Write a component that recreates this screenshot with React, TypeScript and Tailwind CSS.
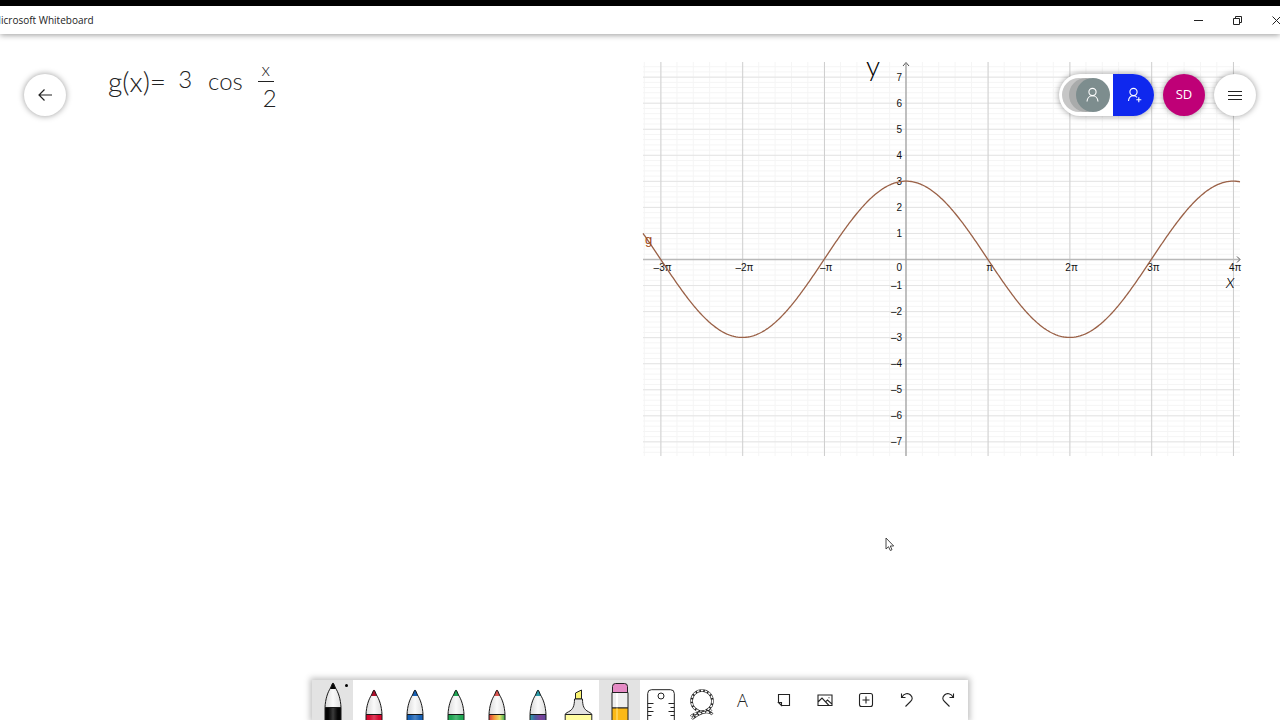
import React, { useState } from 'react';

const ORIGIN_X = 263;
const ORIGIN_Y = 197;
const PI_STEP = 81.8;
const UNIT_STEP = 26.05;
const GRAPH_WIDTH = 597;
const GRAPH_HEIGHT = 394;

const xTicks = [
  { n: -3, label: '–3π' },
  { n: -2, label: '–2π' },
  { n: -1, label: '–π' },
  { n: 1, label: 'π' },
  { n: 2, label: '2π' },
  { n: 3, label: '3π' },
  { n: 4, label: '4π' },
];

const yTicks = [7, 6, 5, 4, 3, 2, 1, -1, -2, -3, -4, -5, -6, -7];

const range = (from: number, to: number) =>
  Array.from({ length: to - from + 1 }, (_, i) => from + i);

const curvePoints = range(0, GRAPH_WIDTH)
  .map((x) => {
    const angle = ((x - ORIGIN_X) / PI_STEP) * Math.PI;
    return `${x},${(ORIGIN_Y + 0.3 - 3 * Math.cos(angle / 2) * UNIT_STEP).toFixed(2)}`;
  })
  .join(' ');

const Graph: React.FC = () => (
  <svg
    width={GRAPH_WIDTH}
    height={GRAPH_HEIGHT}
    className="block overflow-visible font-['Liberation_Sans',sans-serif] text-[10px]"
    role="img"
    aria-label="g"
  >
    {/* Minor grid */}
    <g stroke="#f5f5f5">
      {range(-16, 20).map((i) => {
        const x = ORIGIN_X + (i * PI_STEP) / 5;
        return <line key={i} x1={x} x2={x} y1={0} y2={GRAPH_HEIGHT} />;
      })}
      {range(-37, 37).map((i) => {
        const y = ORIGIN_Y + 0.5 + (i * UNIT_STEP) / 5;
        return <line key={i} x1={0} x2={GRAPH_WIDTH} y1={y} y2={y} />;
      })}
    </g>

    {/* Major grid */}
    <g stroke="#e4e4e4">
      {yTicks.map((n) => {
        const y = ORIGIN_Y + 0.5 - n * UNIT_STEP;
        return <line key={n} x1={0} x2={GRAPH_WIDTH} y1={y} y2={y} />;
      })}
    </g>
    <g stroke="#cfcfcf">
      {xTicks.map(({ n }) => {
        const x = ORIGIN_X + 0.3 + n * PI_STEP;
        return <line key={n} x1={x} x2={x} y1={0} y2={GRAPH_HEIGHT} />;
      })}
    </g>

    {/* Axes */}
    <line x1={0} x2={GRAPH_WIDTH} y1={197.5} y2={197.5} stroke="#b9b9b9" strokeWidth={1.3} />
    <line x1={263} x2={263} y1={2} y2={GRAPH_HEIGHT} stroke="#a6a6a6" strokeWidth={1.4} />
    <path d="M260 4l3-3.5 3 3.5M594 194.5l3 3-3 3" fill="none" stroke="#555" />

    {/* Labels */}
    <g fill="#111" textAnchor="middle">
      {xTicks.map(({ n, label }) => (
        <text key={n} x={ORIGIN_X + n * PI_STEP + 2} y={209}>
          {label}
        </text>
      ))}
    </g>
    <g fill="#111" textAnchor="end">
      {yTicks.map((n) => (
        <text key={n} x={259} y={Math.round(ORIGIN_Y - n * UNIT_STEP) + 4}>
          {n < 0 ? `–${-n}` : n}
        </text>
      ))}
      <text x={259} y={209}>0</text>
    </g>

    <polyline points={curvePoints} fill="none" stroke="#9a6147" strokeWidth={1.3} />
    <text x={2} y={182} fill="#a04a18" className="text-[13px]">g</text>
  </svg>
);

const Formula: React.FC = () => (
  <div className="flex items-start text-[#222] font-['Lato',sans-serif] font-light">
    <span className="pt-1 text-[28px] leading-8">g(x)=</span>
    <span className="ml-3 pt-1 text-[24px] leading-7">3</span>
    <span className="ml-4 pt-1 text-[24px] leading-8">cos</span>
    <span className="ml-3 flex flex-col items-center">
      <span className="w-4 border-b border-[#222] pb-1 text-center text-[18px] leading-4">x</span>
      <span className="pl-2 pt-1 text-[24px] leading-6">2</span>
    </span>
  </div>
);

const Pen: React.FC<{ color: string; id: string; stops?: string[]; tip?: string }> = ({
  color,
  id,
  stops,
  tip,
}) => (
  <svg width="18" height="44" viewBox="0 0 18 44" aria-hidden="true">
    <defs>
      <linearGradient id={`${id}-body`}>
        {stops ? (
          stops.map((c, i) => <stop key={c} offset={i / (stops.length - 1)} stopColor={c} />)
        ) : (
          <>
            <stop offset="0.2" stopColor={color} />
            <stop offset="0.5" stopColor={color} stopOpacity="0.78" />
            <stop offset="0.8" stopColor={color} />
          </>
        )}
      </linearGradient>
      <linearGradient id={`${id}-cone`}>
        <stop offset="0" stopColor="#d9d9d9" />
        <stop offset="0.5" stopColor="#fafafa" />
        <stop offset="1" stopColor="#dedede" />
      </linearGradient>
    </defs>
    <path
      d="M1 25.5C1.4 17 3.6 10.5 6.5 6L9 .8 11.5 6C14.4 10.5 16.6 17 17 25.5V44H1z"
      fill={`url(#${id}-cone)`}
    />
    <path d="M1 25.5H17V44H1z" fill={`url(#${id}-body)`} />
    <path d="M6 7L8.3 1.5Q9 .2 9.7 1.5L12 7z" fill={tip ?? color} />
    <path
      d="M1 44V25.5C1.4 17 3.6 10.5 6.5 6L8.3 1.8Q9 .3 9.7 1.8L11.5 6C14.4 10.5 16.6 17 17 25.5V44M1 25.5H17"
      fill="none"
      stroke="#1a1a1a"
      strokeWidth="1"
    />
  </svg>
);

const Highlighter: React.FC = () => (
  <svg width="29" height="44" viewBox="0 0 29 44" aria-hidden="true">
    <path d="M11.5 10V4L17.5 1V10z" fill="#fbf573" stroke="#222" />
    <path d="M10.5 10H18.5C18.5 17 20 20.5 24.5 22.8Q27.5 24 27.8 25.5H1.2Q1.5 24 4.5 22.8C9 20.5 10.5 17 10.5 10z" fill="#e2e2e2" stroke="#222" />
    <path d="M1.2 25.5H27.8V44H1.2z" fill="#fffda0" stroke="#222" />
  </svg>
);

const Eraser: React.FC = () => (
  <svg width="18" height="46" viewBox="0 0 18 46" aria-hidden="true">
    <path d="M1.5 10.5V4.5Q1.5 1.5 4.5 1.5H13.5Q16.5 1.5 16.5 4.5V10.5z" fill="#e58bc5" stroke="#222" />
    <path d="M1 10.5H17V26H1z" fill="#eeeeee" stroke="#222" />
    <path d="M6 11V25.5" stroke="#fff" strokeWidth="2" />
    <path d="M1 26H17V46H1z" fill="#fbb917" stroke="#222" />
    <path d="M6 26.5V46" stroke="#ffd04f" strokeWidth="2" />
  </svg>
);

const Ruler: React.FC = () => (
  <svg width="28" height="44" viewBox="0 0 28 44" fill="none" stroke="#222" aria-hidden="true">
    <path d="M.7 44V4.5Q.7 .7 4.5 .7H23.5Q27.3 .7 27.3 4.5V44" fill="#fff" />
    <circle cx="14" cy="7" r="3" />
    <path d="M.7 14.5H6.5M.7 18.5H4.5M.7 22.5H6.5M.7 26.5H4.5M27.3 14.5H21.5M27.3 18.5H23.5M27.3 22.5H21.5M27.3 26.5H23.5" />
  </svg>
);

const Lasso: React.FC = () => (
  <svg width="26" height="44" viewBox="0 0 26 44" fill="none" stroke="#222" aria-hidden="true">
    <circle cx="13" cy="12" r="10.5" strokeWidth="2.6" />
    <circle cx="13" cy="12" r="10.5" stroke="#fff" strokeWidth="1.5" strokeDasharray="2.5 1.5" />
    <path d="M2 27.5C6 21.5 18 26 22.5 20.5M23.5 25.5C19 20 8 25 3 30" strokeWidth="2.4" />
    <path d="M2 27.5C6 21.5 18 26 22.5 20.5M23.5 25.5C19 20 8 25 3 30" stroke="#fff" strokeWidth="1.2" strokeDasharray="2.5 1.5" />
  </svg>
);

const PersonIcon: React.FC<{ plus?: boolean }> = ({ plus }) => (
  <svg width="16" height="16" viewBox="0 0 16 16" fill="none" stroke="#fff" strokeWidth="1.1" aria-hidden="true">
    <circle cx="7.5" cy="5" r="3.6" />
    {plus ? (
      <path d="M2.5 14C2.7 10.8 4.8 8.8 7.5 8.8 9 8.8 10.2 9.4 11 10.4M12.8 10.3V15.3M10.3 12.8H15.3" />
    ) : (
      <path d="M2 14.5C2.2 11 4.6 8.8 7.5 8.8S12.8 11 13 14.5" />
    )}
  </svg>
);

const LineIcon: React.FC<{ d: string }> = ({ d }) => (
  <svg width="16" height="16" viewBox="0 0 16 16" fill="none" stroke="#222" strokeWidth="1.1" aria-hidden="true">
    <path d={d} />
  </svg>
);

const drawTools = [
  { name: 'Black pen', raised: true, icon: <Pen id="black" color="#050505" /> },
  { name: 'Red pen', icon: <Pen id="red" color="#d5092f" tip="#b0102c" /> },
  { name: 'Blue pen', icon: <Pen id="blue" color="#1761b5" /> },
  { name: 'Green pen', icon: <Pen id="green" color="#1fa653" /> },
  {
    name: 'Rainbow pen',
    icon: <Pen id="rainbow" color="#d9534f" stops={['#d9363e', '#f59a3c', '#e8e36a', '#35a853']} />,
  },
  {
    name: 'Galaxy pen',
    icon: <Pen id="galaxy" color="#2b9aa8" stops={['#2aa0a4', '#4a5aa0', '#7d3f98', '#5b4a9e']} />,
  },
  { name: 'Highlighter', icon: <Highlighter /> },
  { name: 'Eraser', raised: true, icon: <Eraser /> },
  { name: 'Ruler', icon: <Ruler /> },
  { name: 'Lasso select', icon: <Lasso /> },
];

const insertTools = [
  { name: 'Add note', d: 'M5.5 13.5H13.5V2.5H2.5V10.5M2.5 10.5H5.5V13.5zM2.5 10.5L5.5 13.5' },
  { name: 'Add image', d: 'M1 3H15V13.5H1zM1 10L5 6 12 13.5M8.5 9.8L10.5 8 15 12.2M11.5 5.7H12.5' },
  { name: 'Insert', d: 'M3.5 1.5H12.5Q14.5 1.5 14.5 3.5V12.5Q14.5 14.5 12.5 14.5H3.5Q1.5 14.5 1.5 12.5V3.5Q1.5 1.5 3.5 1.5zM8 4.5V11.5M4.5 8H11.5' },
  { name: 'Undo', d: 'M2.5 1.5V5.5H6.5M2.8 5.3C5 1.5 9 .5 11.5 3S13.5 7.8 11.5 9.5L6.5 14.5' },
  { name: 'Redo', d: 'M13.5 1.5V5.5H9.5M13.2 5.3C11 1.5 7 .5 4.5 3S2.5 7.8 4.5 9.5L9.5 14.5' },
];

const Toolbar: React.FC = () => {
  const [selected, setSelected] = useState(['Black pen', 'Eraser']);

  return (
    <div className="relative flex h-10 self-center bg-white shadow-[0_0_6px_2px_rgba(0,0,0,0.25)]">
      {drawTools.map((tool) => (
        <button
          key={tool.name}
          aria-label={tool.name}
          onClick={() => setSelected([tool.name])}
          className={`relative flex w-[41px] items-start justify-center overflow-hidden ${
            tool.raised ? 'pt-[2px]' : 'pt-[9px]'
          } ${selected.includes(tool.name) ? 'bg-[#e3e3e3]' : 'bg-white'}`}
        >
          {tool.icon}
          {tool.name === 'Black pen' && (
            <span className="absolute right-[5px] top-1 size-[3px] rounded-full bg-black" />
          )}
        </button>
      ))}
      <button
        aria-label="Add text"
        className="flex w-[41px] items-center justify-center text-[18px] font-light text-[#222]"
      >
        A
      </button>
      {insertTools.map((tool) => (
        <button key={tool.name} aria-label={tool.name} className="flex w-[41px] items-center justify-center">
          <LineIcon d={tool.d} />
        </button>
      ))}
    </div>
  );
};

const App: React.FC = () => {
  return (
    <div className="flex h-screen flex-col overflow-hidden bg-white font-['Open_Sans','Noto_Sans',sans-serif]">
      <div className="h-[6px] shrink-0 bg-black" />

      {/* Title bar */}
      <header className="relative z-10 flex h-7 shrink-0 items-center justify-between bg-white shadow-[0_1px_6px_rgba(0,0,0,0.4)]">
        <h1 className="-ml-2 text-[10px] text-[#222]">Microsoft Whiteboard</h1>
        <div className="-mr-4 flex">
          <button aria-label="Minimize" className="flex w-[39px] justify-center">
            <svg width="9" height="9" stroke="#222" aria-hidden="true">
              <path d="M0 4.5H9" />
            </svg>
          </button>
          <button aria-label="Restore" className="flex w-[39px] justify-center">
            <svg width="9" height="9" fill="none" stroke="#222" aria-hidden="true">
              <path d="M.5 2.5H6.5V8.5H.5zM2.5 2.5V.5H8.5V6.5H6.5" />
            </svg>
          </button>
          <button aria-label="Close" className="flex w-[39px] justify-center">
            <svg width="9" height="9" stroke="#222" aria-hidden="true">
              <path d="M.5 .5L8.5 8.5M8.5 .5L.5 8.5" />
            </svg>
          </button>
        </div>
      </header>

      <main className="relative flex flex-1 flex-col justify-between">
        {/* Board content */}
        <div className="absolute left-[108px] top-[27px]">
          <Formula />
        </div>
        <div className="absolute left-[643px] top-7">
          <Graph />
        </div>
        <div className="absolute left-[866px] top-[25px] h-7 overflow-hidden font-['Lato',sans-serif] text-[28px] font-light leading-7 text-black">
          <span className="-mt-2 block">y</span>
        </div>
        <div className="absolute left-[1226px] top-[238px] font-['Lato',sans-serif] text-[20px] font-light leading-4 text-black italic">
          x
        </div>
        <svg className="absolute left-[885px] top-[503px]" width="10" height="15" viewBox="0 0 10 15" aria-hidden="true">
          <path d="M1 1V12L3.5 9.7 5.3 13.5 7 12.7 5.3 9H8.7z" fill="#fff" stroke="#333" strokeWidth="0.9" />
        </svg>

        {/* Floating controls */}
        <div className="relative flex items-start justify-between px-6 pt-10">
          <button
            aria-label="Back"
            className="flex size-[42px] items-center justify-center rounded-full bg-white shadow-[0_0_6px_rgba(0,0,0,0.4)]"
          >
            <svg width="14" height="14" viewBox="0 0 14 14" fill="none" stroke="#222" strokeWidth="1.2" aria-hidden="true">
              <path d="M14 7H1M6.5 1.5L1 7 6.5 12.5" />
            </svg>
          </button>

          <div className="flex gap-[9px]">
            <div className="flex h-[42px] overflow-hidden rounded-full bg-white shadow-[0_0_6px_rgba(0,0,0,0.4)]">
              <button aria-label="Participants" className="flex items-center px-[3px]">
                <span className="size-[34px] rounded-full bg-[#c6c6c6]" />
                <span className="-ml-[27px] size-[34px] rounded-full bg-[#a9abab]" />
                <span className="-ml-[27px] flex size-[34px] items-center justify-center rounded-full bg-[#7d8d8e]">
                  <PersonIcon />
                </span>
              </button>
              <button aria-label="Invite" className="flex w-[41px] items-center justify-center bg-[#0f28ee]">
                <PersonIcon plus />
              </button>
            </div>
            <button className="size-[42px] rounded-full bg-[#bf0077] text-[13px] text-white shadow-[0_0_6px_rgba(0,0,0,0.4)]">
              SD
            </button>
            <button
              aria-label="Settings"
              className="flex size-[42px] items-center justify-center rounded-full bg-white shadow-[0_0_6px_rgba(0,0,0,0.4)]"
            >
              <svg width="14" height="10" stroke="#222" aria-hidden="true">
                <path d="M0 1.5H14M0 5.5H14M0 9.5H14" />
              </svg>
            </button>
          </div>
        </div>

        <Toolbar />
      </main>
    </div>
  );
};

export default App;
